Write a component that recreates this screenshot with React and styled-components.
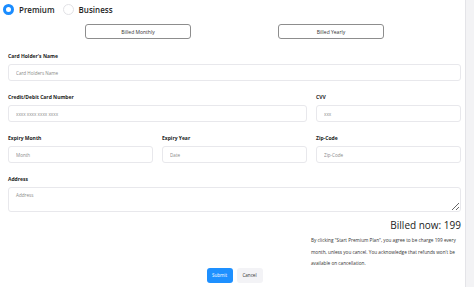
import React from "react";
import styled, { createGlobalStyle } from "styled-components";

const GlobalStyle = createGlobalStyle`
  html, body {
    margin: 0;
    padding: 0;
    background: #ffffff;
    font-family: "Open Sans", "Liberation Sans", sans-serif;
    color: #222;
  }
`;

function Field({ label, placeholder, span }) {
  return (
    <Group $span={span}>
      <Label>{label}</Label>
      <Input placeholder={placeholder} />
    </Group>
  );
}

export default function App() {
  return (
    <>
      <GlobalStyle />
      <Page>
        <Main>
          <PlanRow>
            <Radio $checked />
            <PlanName>Premium</PlanName>
            <Radio />
            <PlanName>Business</PlanName>
          </PlanRow>

          <BillingRow>
            <BillingButton>Billed Monthly</BillingButton>
            <BillingButton>Billed Yearly</BillingButton>
          </BillingRow>

          <Form>
            <Field label="Card Holder's Name" placeholder="Card Holders Name" />
            <Grid>
              <Field span={2} label="Credit/Debit Card Number" placeholder="xxxx xxxx xxxx xxxx" />
              <Field label="CVV" placeholder="xxx" />
            </Grid>
            <Grid>
              <Field label="Expiry Month" placeholder="Month" />
              <Field label="Expiry Year" placeholder="Date" />
              <Field label="Zip-Code" placeholder="Zip-Code" />
            </Grid>
            <Group>
              <Label>Address</Label>
              <TextArea placeholder="Address" />
            </Group>
          </Form>

          <Summary>
            <BilledNow>Billed now: 199</BilledNow>
            <Notice>
              By clicking "Start Premium Plan", you agree to be charge 199 every
              month, unless you cancel. You acknowledge that refunds won't be
              available on cancellation.
            </Notice>
          </Summary>

          <Actions>
            <Submit>Submit</Submit>
            <Cancel>Cancel</Cancel>
          </Actions>
        </Main>
        <Scrollbar />
      </Page>
    </>
  );
}

const Page = styled.div`
  display: flex;
  width: 474px;
  height: 287px;
  overflow: hidden;
`;

const Main = styled.div`
  flex: 1;
  min-width: 0;
  padding: 0 4px 0 8px;
`;

const Scrollbar = styled.div`
  flex: 0 0 8px;
  background: #f3f3f5;
  border-left: 1px solid #e4e4e8;
`;

const PlanRow = styled.div`
  display: flex;
  align-items: center;
  height: 18px;
  margin-left: -5px;
`;

const Radio = styled.span`
  box-sizing: border-box;
  width: 11px;
  height: 11px;
  border-radius: 50%;
  border: ${(p) => (p.$checked ? "3px solid #1a8cff" : "1px solid #e2e2e6")};
  background: #fff;
  margin-right: 5px;
`;

const PlanName = styled.span`
  font-size: 8px;
  font-weight: 600;
  color: #1f1f1f;
  margin-right: 8px;
`;

const BillingRow = styled.div`
  display: flex;
  gap: 87px;
  padding-left: 77px;
  margin-top: 6px;
`;

const BillingButton = styled.button`
  flex: 0 0 106px;
  height: 15px;
  padding: 0;
  border: 1px solid #8d8d8d;
  border-radius: 3px;
  background: #fff;
  font-family: inherit;
  font-size: 5px;
  color: #333;
`;

const Form = styled.div`
  display: flex;
  flex-direction: column;
  gap: 11px;
  margin-top: 12px;
`;

const Grid = styled.div`
  display: grid;
  grid-template-columns: repeat(3, 1fr);
  column-gap: 9px;
`;

const Group = styled.div`
  display: flex;
  flex-direction: column;
  min-width: 0;
  grid-column: span ${(p) => p.$span || 1};
`;

const Label = styled.label`
  font-size: 5px;
  font-weight: 700;
  color: #222;
  line-height: 9px;
  margin: 1px 0 3px;
`;

const Input = styled.input`
  box-sizing: border-box;
  width: 100%;
  min-width: 0;
  height: 17px;
  padding: 0 7px;
  border: 1px solid #e8e8ec;
  border-radius: 3px;
  font-family: inherit;
  font-size: 4.6px;
  outline: none;
  &::placeholder {
    color: #8a8a8a;
  }
`;

const TextArea = styled.textarea`
  box-sizing: border-box;
  width: 100%;
  height: 25px;
  padding: 4px 7px;
  border: 1px solid #e8e8ec;
  border-radius: 3px;
  font-family: inherit;
  font-size: 4.6px;
  resize: vertical;
  outline: none;
  &::placeholder {
    color: #8a8a8a;
  }
`;

const Summary = styled.div`
  display: flex;
  flex-direction: column;
  align-items: flex-end;
  margin-top: 6px;
`;

const BilledNow = styled.div`
  font-size: 10px;
  line-height: 15px;
  color: #222;
`;

const Notice = styled.p`
  width: 150px;
  margin: 2px 0 0;
  font-size: 4.7px;
  line-height: 11.5px;
  color: #333;
`;

const Actions = styled.div`
  display: flex;
  justify-content: center;
  gap: 4px;
  margin-top: -2px;
`;

const Submit = styled.button`
  width: 26px;
  height: 15px;
  padding: 0;
  border: none;
  border-radius: 3px;
  background: #1e90ff;
  color: #fff;
  font-family: inherit;
  font-size: 4.6px;
`;

const Cancel = styled(Submit)`
  background: #f3f3f6;
  color: #333;
`;
